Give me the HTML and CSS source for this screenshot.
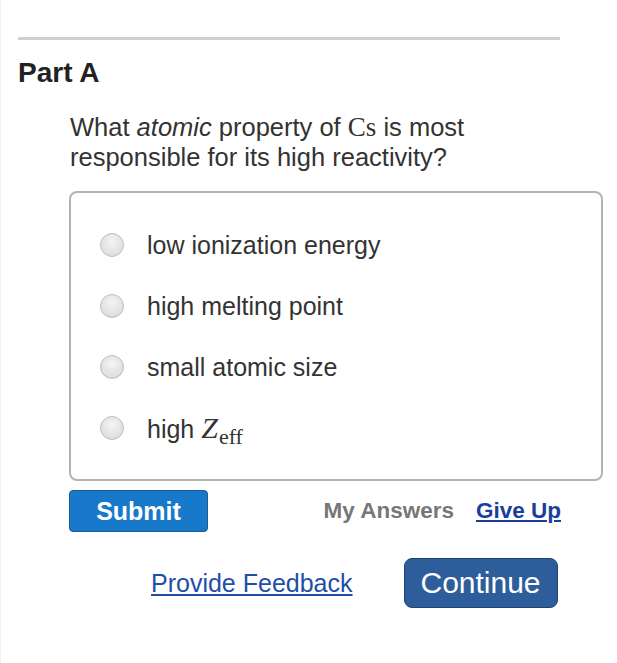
FILE: index.html
```html
<!DOCTYPE html>
<html>
<head>
<meta charset="utf-8">
<link rel="stylesheet" href="styles.css">
</head>
<body>
<div class="page">
  <div class="rule"></div>
  <h2 class="part">Part A</h2>
  <div class="content">
    <p class="question"><span class="qline">What <i>atomic</i> property of <span class="math">Cs</span> is most</span><span class="qline">responsible for its high reactivity?</span></p>
    <div class="choices">
      <label class="choice"><span class="radio"></span><span class="label">low ionization energy</span></label>
      <label class="choice"><span class="radio"></span><span class="label">high melting point</span></label>
      <label class="choice"><span class="radio"></span><span class="label">small atomic size</span></label>
      <label class="choice"><span class="radio"></span><span class="label">high <span class="math mi">Z</span><span class="math sub">eff</span></span></label>
    </div>
    <div class="actions">
      <button class="submit">Submit</button>
      <div class="links">
        <span class="myans">My Answers</span>
        <a class="giveup" href="#">Give Up</a>
      </div>
    </div>
    <div class="footer">
      <a class="feedback" href="#">Provide Feedback</a>
      <button class="continue">Continue</button>
    </div>
  </div>
</div>
</body>
</html>
```
FILE: styles.css
```css
html, body {
  margin: 0;
  padding: 0;
  background: #fff;
}
body {
  font-family: "Liberation Sans", Arial, sans-serif;
  color: #333;
  border-left: 1px solid #f0f0f0;
  min-height: 663px;
  box-sizing: border-box;
}
.page {
  padding: 37px 0 0 17px;
  width: 542px;
}
.rule {
  height: 3px;
  background: #d0d0d0;
}
.part {
  margin: 18px 0 0 0;
  font-size: 28px;
  font-weight: bold;
  color: #222;
  line-height: 30px;
}
.content {
  margin-left: 51px;
  width: 534px;
}
.question {
  margin: 24px 0 0 1px;
  font-size: 25.5px;
  line-height: 30px;
  color: #333;
}
.qline {
  display: block;
  white-space: nowrap;
}
.math {
  font-family: "Liberation Serif", "Times New Roman", serif;
  font-size: 27px;
  line-height: 1;
}
.mi {
  font-style: italic;
  font-size: 30px;
}
.sub {
  font-size: 22px;
  position: relative;
  top: 6px;
  margin-left: 1px;
}
.choices {
  margin-top: 19px;
  border: 2px solid #b3b3b3;
  border-radius: 8px;
  height: 290px;
  box-sizing: border-box;
  display: flex;
  flex-direction: column;
  padding: 40px 0 0 29px;
  gap: 37px;
}
.choice {
  display: flex;
  align-items: center;
  height: 24px;
  font-size: 25px;
  color: #333;
}
.radio {
  width: 22px;
  height: 22px;
  border-radius: 50%;
  border: 1px solid #bdbdbd;
  background: radial-gradient(circle at 50% 35%, #f4f4f4, #d6d6d6);
  margin-right: 23px;
  flex: none;
}
.actions {
  margin-top: 9px;
  display: flex;
  align-items: center;
  justify-content: space-between;
}
.submit {
  width: 139px;
  height: 42px;
  background: #1879cb;
  border: 1px solid #1a5c96;
  border-radius: 4px;
  color: #fff;
  font-family: "Liberation Sans", Arial, sans-serif;
  font-weight: bold;
  font-size: 25px;
  padding: 0;
}
.links {
  display: flex;
  gap: 22px;
  margin-right: 42px;
  font-size: 22.5px;
  font-weight: bold;
}
.myans {
  color: #777;
}
.giveup {
  color: #1a3e9c;
}
.footer {
  margin-top: 26px;
  display: flex;
  align-items: center;
  padding-left: 82px;
}
.feedback {
  color: #1f4ea8;
  font-size: 25px;
}
.continue {
  margin-left: 51px;
  width: 154px;
  height: 50px;
  background: #2d5e9b;
  border: 1px solid #1c4475;
  border-radius: 8px;
  color: #fff;
  font-family: "Liberation Sans", Arial, sans-serif;
  font-size: 30px;
  padding: 0;
}
```
